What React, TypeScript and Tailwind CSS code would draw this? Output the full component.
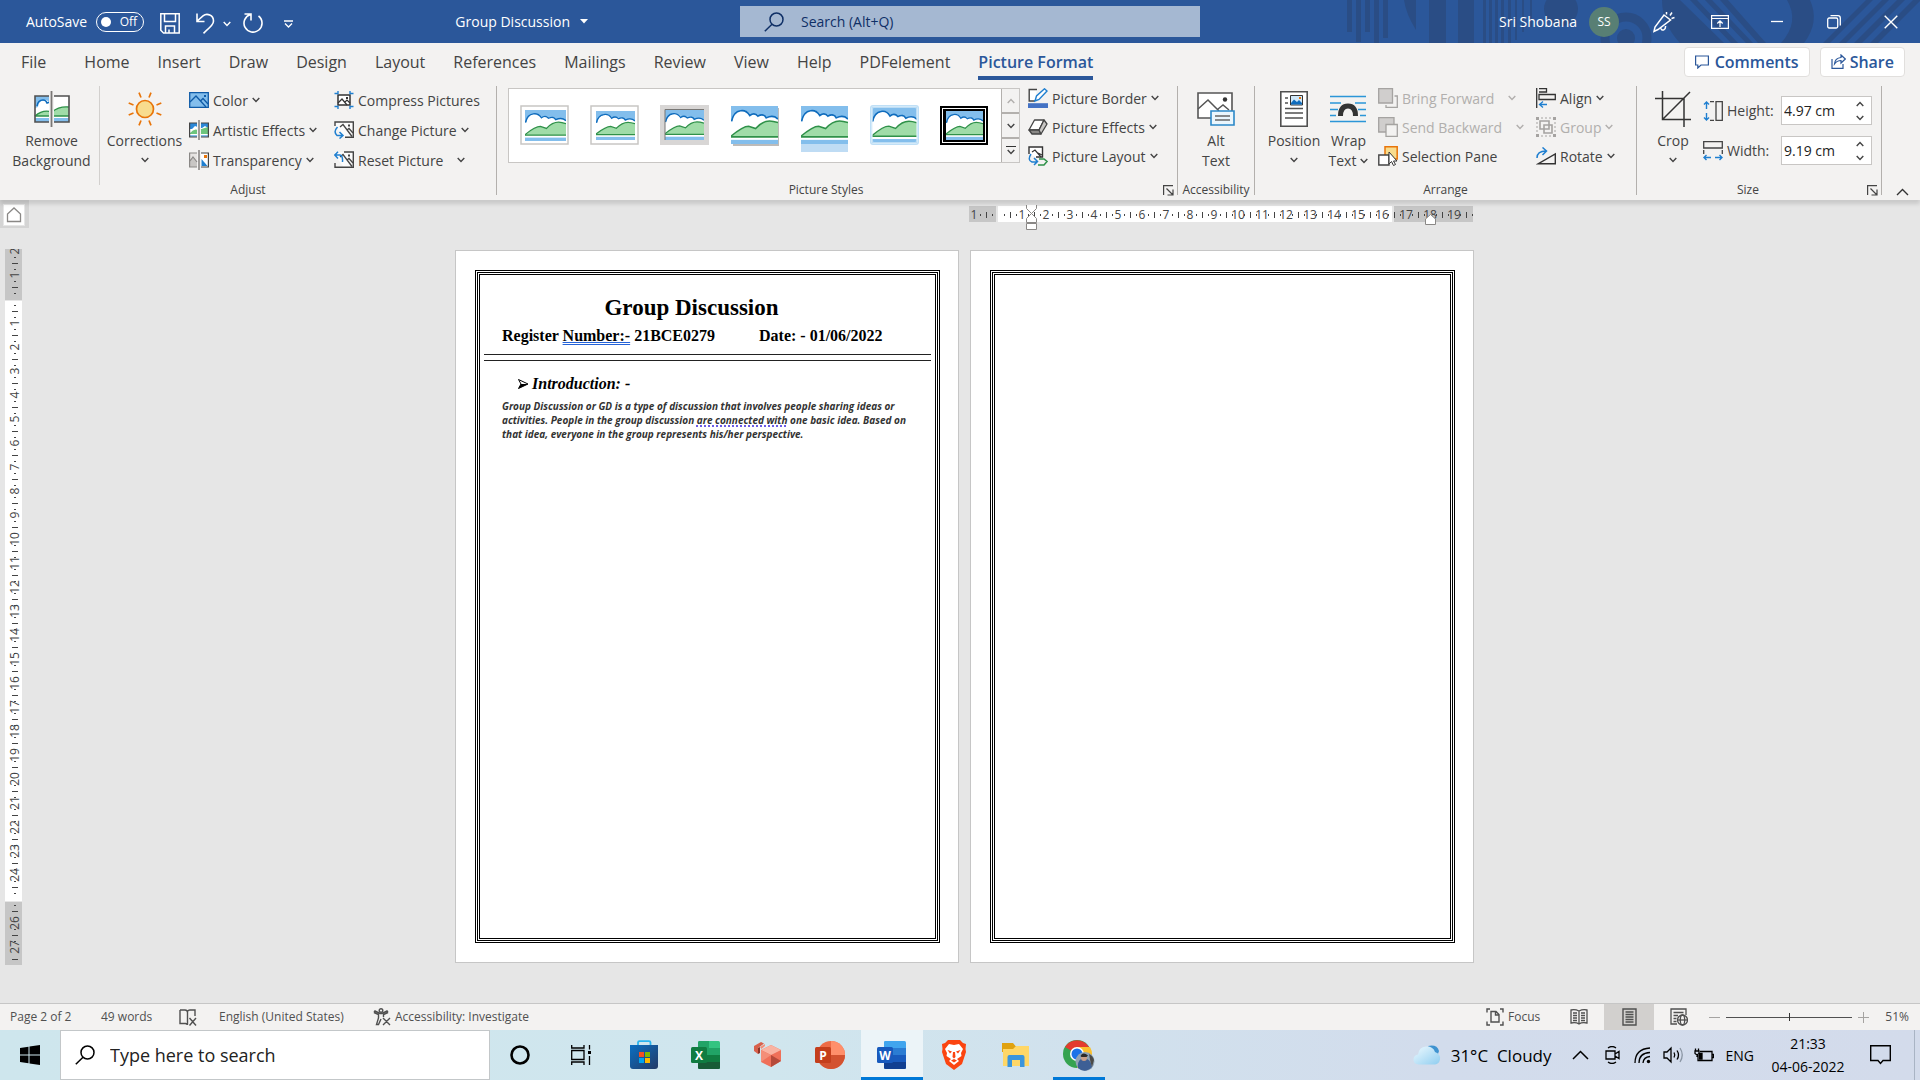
import { useState } from "react";
import type { ReactNode } from "react";

type IconProps = { className?: string };

const tabs = [
  "File",
  "Home",
  "Insert",
  "Draw",
  "Design",
  "Layout",
  "References",
  "Mailings",
  "Review",
  "View",
  "Help",
  "PDFelement",
  "Picture Format",
];

/* ---------- small shared pieces ---------- */

function Caret({ className = "" }: IconProps) {
  return (
    <svg className={`shrink-0 ${className}`} width="8" height="6" viewBox="0 0 8 6" fill="none" stroke="currentColor" strokeWidth="1.4">
      <path d="M0.7 1 4 4.5 7.3 1" />
    </svg>
  );
}

function SearchGlyph({ className = "" }: IconProps) {
  return (
    <svg className={className} width="20" height="20" viewBox="0 0 20 20" fill="none" stroke="currentColor" strokeWidth="1.5">
      <circle cx="12.5" cy="7.5" r="6.5" />
      <path d="M8 12.2 0.8 19.2" />
    </svg>
  );
}

// The hills-and-clouds drawing that every picture style uses
function Landscape() {
  return (
    <>
      <rect width="40" height="32" fill="#fff" />
      <path d="M0 0H40V11Q36 7 30 10Q28 6 24 8Q20 5 17 8Q13 2 8 4Q2 6 1.5 12L0 13Z" fill="#83beec" />
      <path d="M0.5 13Q2 5 8 4Q13 3 16 8Q20 5 23 8.5Q28 6 30 10Q36 7 40 11" fill="none" stroke="#0f6cbd" strokeWidth="1.4" />
      <path d="M0 26Q10 17 15 17Q18 18 21 19Q28 11 36 13L40 14V26Z" fill="#a0dca8" />
      <path d="M0 25.5Q10 17 15 17Q18 18 21 19Q28 11 36 13L40 14" fill="none" stroke="#2f9149" strokeWidth="1.3" />
      <path d="M0 26H40" stroke="#2f9149" strokeWidth="1.3" />
      <rect y="28.5" width="40" height="3.5" fill="#83beec" />
    </>
  );
}

/* ---------- title bar ---------- */

function TitleDecoration() {
  return (
    <svg className="absolute right-0 top-0" width="580" height="43" viewBox="0 0 580 43" fill="#2a4d85">
      <path d="M7 0h5v32H7zM16 0h5v42h-5zM25 0h5v32h-5zM34 0h5v43h-5zM43 0h5v38h-5z" />
      <path d="M64 0H76V30Q66 14 64 0ZM89 0h17v43H89zM118 0h16v43h-16z" />
      <path d="M143 0h3v43h-3zM149 0h3v43h-3zM155 0h3v43h-3zM161 0h3v43h-3zM168 0h3v43h-3zM175 0h2v40h-2zM182 0h2v32h-2zM190 0h2v27h-2z" />
      <circle cx="221" cy="9" r="17" />
      <circle cx="286" cy="38" r="21" fill="none" stroke="#2a4d85" strokeWidth="9" />
      <circle cx="286" cy="38" r="9" />
      <path d="M322 0H340L384 43H340Q322 24 322 0Z" />
      <path d="M350 0h7l41 43h-7zM365 0h7l41 43h-7zM380 0h8l38 43h-8z" />
      <path d="M447 0H470Q480 22 464 43H441Q460 22 447 0Z" />
      <path d="M526 0h7L490 43h-7zM542 0h7L506 43h-7zM557 0h8L522 43h-8zM573 0h7v1L538 43h-8z" />
    </svg>
  );
}

function TitleBar() {
  const [autoSave, setAutoSave] = useState(false);
  return (
    <header className="relative h-[43px] shrink-0 bg-[#2b579a] text-white">
      <TitleDecoration />
      <div className="relative grid h-full grid-cols-[37fr_23fr_36fr] items-center text-[14px]">
        <div className="flex items-center pl-[26px]">
          <span id="autosave">AutoSave</span>
          <button
            role="switch"
            aria-checked={autoSave}
            aria-labelledby="autosave"
            onClick={() => setAutoSave(!autoSave)}
            className="ml-[9px] flex h-5 w-12 items-center justify-between rounded-full border border-white px-1 text-[12px]"
          >
            <span className="h-2.5 w-2.5 rounded-full bg-white" />
            <span className="pr-0.5">{autoSave ? "On" : "Off"}</span>
          </button>
          <button aria-label="Save" className="ml-4 mt-1">
            <svg width="20" height="21" viewBox="0 0 20 21" fill="none" stroke="#fff" strokeWidth="1.5">
              <path d="M0.8 0.8H19.2V20H3.5L0.8 17.3ZM4.5 1V8.5H15.5V1M5.5 20V13H14.5V20M9 20v-3.5" />
            </svg>
          </button>
          <button aria-label="Undo" className="ml-4 mt-1 flex items-center gap-2">
            <svg width="19" height="21" viewBox="0 0 19 21" fill="none" stroke="#fff" strokeWidth="1.6">
              <path d="M1 0.5V8.5H8.5M1.2 8 7 2.8C11 -0.2 17.5 2 17.5 8C17.5 11 16 12.5 7.5 20.3" />
            </svg>
            <Caret />
          </button>
          <button aria-label="Repeat" className="ml-3 mt-1">
            <svg width="21" height="21" viewBox="0 0 21 21" fill="none" stroke="#fff" strokeWidth="1.6">
              <path d="M1.5 1H8V7.5M7.5 1.5A9 9 0 1 0 15.500 3" />
            </svg>
          </button>
          <button aria-label="Customize Quick Access Toolbar" className="ml-5 mt-1">
            <svg width="9" height="8" viewBox="0 0 9 8" fill="none" stroke="#fff" strokeWidth="1.3">
              <path d="M0 1H9M1 3.5 4.5 7 8 3.5" />
            </svg>
          </button>
          <button className="ml-auto mr-[152px] flex items-center gap-2.5 whitespace-nowrap">
            Group Discussion
            <svg width="8" height="5" viewBox="0 0 8 5" fill="#fff">
              <path d="M0 0H8L4 4.5Z" />
            </svg>
          </button>
        </div>
        <label className="flex h-[31px] items-center bg-[#a5b8d2] px-6 text-[#0f2f66]">
          <SearchGlyph />
          <input
            aria-label="Search"
            placeholder="Search (Alt+Q)"
            className="ml-[17px] min-w-0 flex-1 bg-transparent outline-none placeholder:text-[#0f2f66]"
          />
        </label>
        <div className="flex items-center justify-end pr-[22px]">
          <span className="whitespace-nowrap">Sri Shobana</span>
          <button aria-label="Account" className="ml-3 h-[30px] w-[30px] rounded-full bg-[#587f74] text-[12px]">
            SS
          </button>
          <button aria-label="Coming soon" className="ml-[34px]">
            <svg width="22" height="22" viewBox="0 0 22 22" fill="none" stroke="#fff" strokeWidth="1.5">
              <path d="M11 4 17.5 9 5 18.5 1 20.5 2 16ZM8 17.5c1 3 5 1.5 4.5-2.5M13.5 3.5V1M17 4.5 19 1.5M18.5 7.5 21.5 6.5" />
            </svg>
          </button>
          <button aria-label="Ribbon display options" className="ml-9">
            <svg width="18" height="14" viewBox="0 0 18 14" fill="none" stroke="#fff" strokeWidth="1.2">
              <path d="M0.6 0.6H17.4V13.4H0.6ZM0.6 3.5H17.4M9 12V6M6.3 8.5 9 5.8 11.7 8.5" />
            </svg>
          </button>
          <button aria-label="Minimize" className="ml-[41px]">
            <svg width="14" height="14" viewBox="0 0 14 14" stroke="#fff" strokeWidth="1.3">
              <path d="M1 6.5H13" />
            </svg>
          </button>
          <button aria-label="Restore" className="ml-[43px]">
            <svg width="14" height="14" viewBox="0 0 14 14" fill="none" stroke="#fff" strokeWidth="1.3">
              <rect x="0.7" y="3" width="10" height="10" rx="1.5" />
              <path d="M3.5 0.7H11Q13.3 0.7 13.3 3V10.5" />
            </svg>
          </button>
          <button aria-label="Close" className="ml-[43px]">
            <svg width="14" height="14" viewBox="0 0 14 14" stroke="#fff" strokeWidth="1.4">
              <path d="M0.7 0.7 13.3 13.3M13.3 0.7 0.7 13.3" />
            </svg>
          </button>
        </div>
      </div>
    </header>
  );
}

/* ---------- ribbon tabs ---------- */

function RibbonTabs() {
  const [active, setActive] = useState("Picture Format");
  return (
    <nav className="flex h-[37px] shrink-0 items-center bg-[#f3f2f1] pl-[21px] pr-[15px]">
      <div className="flex flex-1 gap-7 text-[16px] text-[#444]">
        {tabs.map((tab) => (
          <button
            key={tab}
            onClick={() => setActive(tab)}
            className={
              tab === active
                ? "h-9 whitespace-nowrap border-b-4 border-[#2b579a] pt-1 font-semibold text-[#2b579a]"
                : "h-9 whitespace-nowrap border-b-4 border-transparent pt-1 first:pr-2.5"
            }
          >
            {tab}
          </button>
        ))}
      </div>
      <div className="flex gap-2.5 text-[16px] font-semibold text-[#2b579a]">
        <button className="flex h-[30px] items-center gap-1.5 rounded border border-[#e1dfdd] bg-white px-2.5">
          <svg width="14" height="14" viewBox="0 0 14 14" fill="none" stroke="#2b579a" strokeWidth="1.2">
            <path d="M0.6 1H13.4V10H6L2.8 13V10H0.6Z" />
          </svg>
          Comments
        </button>
        <button className="flex h-[30px] items-center gap-1 rounded border border-[#e1dfdd] bg-white px-2.5">
          <svg width="15" height="15" viewBox="0 0 15 15" fill="none" stroke="#2b579a" strokeWidth="1.2">
            <path d="M1 5V14.4H12V10M10 1 14.3 5 10 9V6.5Q6 6.5 3.5 10Q4 4 10 3.5Z" />
          </svg>
          Share
        </button>
      </div>
    </nav>
  );
}

/* ---------- ribbon icons ---------- */

function RemoveBackgroundIcon() {
  return (
    <svg width="36" height="36" viewBox="0 0 36 36" fill="none">
      <path d="M1 5H35V31H1Z" fill="#fff" />
      <path d="M1 5H17V13Q14 9 11 9Q4 10 4 16L1 17Z" fill="#83beec" />
      <path d="M3 15Q4 9 9 9Q12 9 13 12L16 11" stroke="#0f6cbd" strokeWidth="1.5" />
      <path d="M1 25Q9 18 18 21Q25 15 35 16V25Z" fill="#a0dca8" />
      <path d="M1 25Q9 18 18 21Q25 15 35 16M1 25H35" stroke="#2f9149" strokeWidth="1.4" />
      <path d="M1 27H35V31H1Z" fill="#83beec" />
      <path d="M1 5H35V31H1Z" stroke="#505050" strokeWidth="1.6" />
      <path d="M17.5 0V36" stroke="#f3f2f1" strokeWidth="5" />
      <path d="M17.5 0V36" stroke="#797775" strokeWidth="1.8" />
    </svg>
  );
}

function CorrectionsIcon() {
  return (
    <svg width="34" height="34" viewBox="0 0 34 34" fill="none" stroke="#e8750a" strokeWidth="1.7">
      <circle cx="17" cy="17" r="8.5" fill="#f8dc8e" />
      <path d="M13 5.5 11 0.7M21 5.5 23 0.7M13 28.5 11 33.3M21 28.5 23 33.3M5.5 13 0.7 11M5.5 21 0.7 23M28.5 13 33.3 11M28.5 21 33.3 23" />
    </svg>
  );
}

function ColorIcon() {
  return (
    <svg width="20" height="16" viewBox="0 0 20 16" fill="none" stroke="#0f5ba7" strokeWidth="1.3">
      <path d="M0.7 0.7H19.3V15.3H0.7Z" fill="#83beec" />
      <path d="M1 10 7 4 17 15M11.5 9 14 6.5 19 12" fill="none" />
      <path d="M15 3h2v2h-2z" fill="#0f5ba7" stroke="none" />
    </svg>
  );
}

function ArtisticIcon() {
  return (
    <svg width="20" height="20" viewBox="0 0 20 20" fill="none">
      <path d="M0.6 3H19.4V17H0.6Z" fill="#fff" />
      <path d="M1 3H19V8L16 6 13 8H11L6 6 3 9H1Z" fill="#2b88d8" />
      <path d="M1 13Q5 8 9 10L19 7V14H1Z" fill="#6cc47c" />
      <path d="M1 15h18v2H1z" fill="#83beec" />
      <path d="M0.6 3H19.4V17H0.6Z" stroke="#444" strokeWidth="1.2" />
      <path d="M10 0V20" stroke="#f3f2f1" strokeWidth="4" />
      <path d="M10 0V20" stroke="#797775" strokeWidth="1.4" />
    </svg>
  );
}

function TransparencyIcon() {
  return (
    <svg width="20" height="20" viewBox="0 0 20 20" fill="none">
      <path d="M0.6 3H8V17H0.6Z" fill="#e6e4e2" />
      <path d="M0.6 17V11L4 7 8 12V17Z" fill="#c8c6c4" />
      <path d="M8 3H0.6V17H8M1 11 4 7 8 12" stroke="#8a8886" strokeWidth="1.2" />
      <path d="M12 3H19.4V17H12" fill="#fff" stroke="#444" strokeWidth="1.2" />
      <path d="M12.5 16V9L18.5 16Z" fill="#1f7fd0" />
      <path d="M15 5h3v3h-3z" fill="#e8750a" />
      <path d="M10 0V20" stroke="#797775" strokeWidth="1.4" />
    </svg>
  );
}

function CompressIcon() {
  return (
    <svg width="20" height="18" viewBox="0 0 20 18" fill="none">
      <path d="M4 4H16V14H4Z" fill="#fff" stroke="#333" strokeWidth="1.5" />
      <path d="M4 12 8 8 13 14M11 11 13 9 16 12" stroke="#333" strokeWidth="1.2" />
      <path d="M12 6h2v2h-2z" fill="#333" />
      <path d="M4 0V2.5H0.5M16 0V2.5H19.5M4 18V15.5H0.5M16 18V15.5H19.5" stroke="#1f7fd0" strokeWidth="1.4" />
    </svg>
  );
}

function ChangePictureIcon({ reset = false }: { reset?: boolean }) {
  return (
    <svg width="20" height="18" viewBox="0 0 20 18" fill="none">
      <path d="M1 5V1H19.3V16.3H10" fill="#fbfbfb" />
      <path d={reset ? "M10 1H19.3V16.3H1V12" : "M1 5V1H19.3V16.3H11"} stroke="#444" strokeWidth="1.4" />
      <path d="M6 6 9 3.5 18 15.5M13 9 15 7.5 19 12" stroke="#444" strokeWidth="1.3" />
      <path d="M14 3.5h2v2h-2z" fill="#444" />
      {reset ? (
        <path d="M1 4H6Q9 5 8.5 11M4 0.7 0.8 4 4 7.5" stroke="#1f7fd0" strokeWidth="1.5" />
      ) : (
        <path d="M3.5 6Q-1 11 3 14.5H8M5.5 11 9 14.5 5.5 17.5" stroke="#1f7fd0" strokeWidth="1.5" />
      )}
    </svg>
  );
}

function BorderIcon() {
  return (
    <svg width="20" height="20" viewBox="0 0 20 20" fill="none">
      <path d="M9 1.5H1.2V13H7" fill="#fff" stroke="#444" strokeWidth="1.4" />
      <path d="M7 13 8.5 8 16.5 0.8 19 3 11 11.5Z" fill="#fff" stroke="#1f7fd0" strokeWidth="1.4" />
      <path d="M0 15.2h20V20H0z" fill="#4472c4" />
    </svg>
  );
}

function EffectsIcon() {
  return (
    <svg width="20" height="16" viewBox="0 0 20 16" fill="none" stroke="#444" strokeWidth="1.3" strokeLinejoin="round">
      <path d="M6.500 1H16L11 11H1Z" fill="#fff" />
      <path d="M1 11H11L13 15H4Z" fill="#8a8886" />
      <path d="M16 1 19 5 13 15 11 11Z" fill="#c8c6c4" />
    </svg>
  );
}

function LayoutIcon() {
  return (
    <svg width="20" height="20" viewBox="0 0 20 20" fill="none">
      <path d="M1 8V1H14.5V11H8" fill="#fff" stroke="#333" strokeWidth="1.4" />
      <path d="M4 6 7 4 13 11M10 7 14 9" stroke="#333" strokeWidth="1.2" />
      <path d="M3 8Q-1 14 4 16H9M6 12 9.5 15.5 6 19" stroke="#1f7fd0" strokeWidth="1.5" />
      <path d="M11 13H16L19 15.5 16 19H10" stroke="#2f9149" strokeWidth="1.5" />
    </svg>
  );
}

function AltTextIcon() {
  return (
    <svg width="38" height="34" viewBox="0 0 38 34" fill="none">
      <path d="M1 1H35V26H1Z" fill="#fff" stroke="#555" strokeWidth="1.6" />
      <path d="M1 17 11 8 22 19M21 17 26 13 32 18" stroke="#555" strokeWidth="1.5" />
      <circle cx="28" cy="7.5" r="2.2" fill="#333" />
      <path d="M14 19H37V33H14Z" fill="#eaf6fd" stroke="#2b88c8" strokeWidth="1.6" />
      <path d="M18 24H33M18 28H33" stroke="#666" strokeWidth="1.4" />
    </svg>
  );
}

function PositionIcon() {
  return (
    <svg width="28" height="36" viewBox="0 0 28 36" fill="none" stroke="#505050">
      <path d="M0.8 0.8H27.2V35.2H0.8Z" fill="#fff" strokeWidth="1.6" />
      <path d="M5 7h3M5 12h3M5 17.5H23M5 22H23M5 27H23" strokeWidth="1.4" />
      <path d="M10.5 4.5H22.5V14H10.5Z" fill="#cfe7f8" stroke="#333" />
      <path d="M11 12 14 8.500 17 11 19 9 22 12V13.5H11Z" fill="#0f6cbd" stroke="none" />
      <path d="M19 6h2v2h-2z" fill="#e8750a" stroke="none" />
    </svg>
  );
}

function WrapIcon() {
  return (
    <svg width="36" height="28" viewBox="0 0 36 28" fill="none">
      <path d="M0 1.5H36M0 8H11M25 8H36M0 14.5H8M28 14.5H36M0 20.5H6M30 20.5H36M0 26.5H36" stroke="#2b96d8" strokeWidth="1.7" />
      <path d="M10.5 21Q10.5 11 18 11Q25.5 11 25.5 21" stroke="#333" strokeWidth="5" />
    </svg>
  );
}

function LayerIcon({ back = false }: { back?: boolean }) {
  return (
    <svg width="20" height="20" viewBox="0 0 20 20" fill="none" stroke="#a5a3a1" strokeWidth="1.3">
      {back ? (
        <>
          <path d="M0.7 0.7H16V15H0.7Z" fill="#d0cecd" />
          <path d="M8 7.5H19.3V19.3H8Z" fill="#f3f2f1" />
        </>
      ) : (
        <>
          <path d="M0.7 0.7H14.5V15H0.7Z" fill="#d0cecd" />
          <path d="M16.5 8H19.3V19.3H8V17" />
        </>
      )}
    </svg>
  );
}

function SelectionIcon() {
  return (
    <svg width="20" height="20" viewBox="0 0 20 20" fill="none">
      <path d="M7 0.8H19.2V13H7Z" fill="#f8dc8e" stroke="#e8750a" strokeWidth="1.5" />
      <path d="M0.8 9H11V19H0.8Z" fill="#fff" stroke="#444" strokeWidth="1.4" />
      <path d="M11 6V18L13.5 15.5 15.5 19.5 17.5 18.5 15.5 15H19Z" fill="#fff" stroke="#333" />
    </svg>
  );
}

function AlignIcon() {
  return (
    <svg width="20" height="20" viewBox="0 0 20 20" fill="none" stroke="#333" strokeWidth="1.3">
      <path d="M0.7 0V20M3 0.7H10.5V4H3M3 6.5H19.3V11.5H3Z" />
      <path d="M11 16.5H4M7 13.5 3.5 16.5 7 19.5" stroke="#1f7fd0" />
    </svg>
  );
}

function GroupIcon() {
  return (
    <svg width="20" height="20" viewBox="0 0 20 20" fill="none" stroke="#a5a3a1" strokeWidth="1.6">
      <path d="M4 4H13V12H4ZM8 8H16V16H8Z" />
      <path d="M0 1.5h3M17 1.5h3M0 18.5h3M17 18.5h3" strokeWidth="3" />
      <path d="M5 1H15M5 19H15M1 5V15M19 5V15" strokeDasharray="2 2" strokeWidth="1" />
    </svg>
  );
}

function RotateIcon() {
  return (
    <svg width="20" height="18" viewBox="0 0 20 18" fill="none">
      <path d="M2 16.8H19.3V7Z" stroke="#333" strokeWidth="1.4" />
      <path d="M1 11Q1 4 10 4M6.5 0.5 10.5 4 6.5 8" stroke="#1f7fd0" strokeWidth="1.5" />
    </svg>
  );
}

function CropIcon() {
  return (
    <svg width="36" height="36" viewBox="0 0 36 36" fill="none" stroke="#333" strokeWidth="1.5">
      <path d="M7.5 0V28.5H36M0 7.5H29V36M7.5 28.5 35 1" />
    </svg>
  );
}

function HeightIcon() {
  return (
    <svg width="20" height="20" viewBox="0 0 20 20" fill="none">
      <path d="M3.5 1V8M1 3.5 3.5 1 6 3.5M3.5 12V19M1 16.5 3.5 19 6 16.5" stroke="#1f7fd0" strokeWidth="1.4" />
      <path d="M7 0.7H11M7 19.3H11M13 0.7H19.3V19.3H13Z" stroke="#444" strokeWidth="1.3" />
    </svg>
  );
}

function WidthIcon() {
  return (
    <svg width="20" height="20" viewBox="0 0 20 20" fill="none">
      <path d="M1 16.5H8M3.5 14 1 16.5 3.5 19M12 16.5H19M16.5 14 19 16.5 16.5 19" stroke="#1f7fd0" strokeWidth="1.4" />
      <path d="M0.7 9V13M19.3 9V13M0.7 0.7H19.3V7H0.7Z" stroke="#444" strokeWidth="1.3" />
    </svg>
  );
}

/* ---------- ribbon ---------- */

function RibbonGroup({
  label,
  launcher = false,
  children,
}: {
  label: string;
  launcher?: boolean;
  children: ReactNode;
}) {
  return (
    <section aria-label={label} className="flex h-[109px] flex-col border-r border-[#b3b0ad]">
      <div className="flex flex-1">{children}</div>
      <div className="flex h-2.5 items-center">
        <span className="flex-1 whitespace-nowrap text-center text-[12px] leading-3">{label}</span>
        {launcher && (
          <button aria-label={`${label} dialog`} className="ml-2 mr-[3px]">
            <svg width="11" height="11" viewBox="0 0 11 11" fill="none" stroke="#444" strokeWidth="1.2">
              <path d="M0.6 10V0.6H10M3.5 3.5 9.5 9.5M10 4.5V10H4.5" />
            </svg>
          </button>
        )}
      </div>
    </section>
  );
}

function Command({
  icon,
  label,
  menu = false,
  split = false,
  disabled = false,
}: {
  icon: ReactNode;
  label: string;
  menu?: boolean;
  split?: boolean;
  disabled?: boolean;
}) {
  return (
    <button
      disabled={disabled}
      className={
        disabled
          ? "flex h-6 items-center gap-1 whitespace-nowrap text-[#b1afad]"
          : "flex h-6 items-center gap-1 whitespace-nowrap"
      }
    >
      {icon}
      {label}
      {menu && <Caret className={split ? "ml-2.5" : ""} />}
    </button>
  );
}

function BigCommand({ icon, lines, caret }: { icon: ReactNode; lines: string[]; caret?: "below" | "inline" }) {
  return (
    <button className="flex flex-col items-center leading-5">
      <span className="flex h-[45px] items-center">{icon}</span>
      {lines.map((line, i) => (
        <span key={line} className="flex items-center gap-1 whitespace-nowrap">
          {line}
          {caret === "inline" && i === lines.length - 1 && <Caret />}
        </span>
      ))}
      {caret === "below" && <Caret className="mt-1.5" />}
    </button>
  );
}

const pictureStyles = [
  "Simple Frame, White",
  "Beveled Matte, White",
  "Metal Frame",
  "Drop Shadow Rectangle",
  "Reflected Rounded Rectangle",
  "Soft Edge Rectangle",
  "Double Frame, Black",
];

// where the drawing sits inside its 50px thumbnail, per style
const thumbBoxes = [
  [5, 5, 41, 31],
  [6, 6, 39, 29],
  [5, 5, 39, 30],
  [1, 1, 47, 38],
  [1, 1, 47, 38],
  [2, 2, 45, 36],
  [6, 6, 37, 29],
];

function StyleThumb({ index }: { index: number }) {
  const [x, y, width, height] = thumbBoxes[index];
  return (
    <svg width="50" height="50" viewBox="0 0 50 50" fill="none">
      {index < 2 && <rect x="1" y="1" width="47" height="38" fill="#fff" stroke="#c8c6c4" strokeWidth="1.5" />}
      {index === 2 && <rect width="49" height="40" fill="#d8d6d5" />}
      {index === 3 && <rect x="3" y="3" width="46" height="38" fill="#bdbbb9" />}
      {index === 4 && <rect x="1" y="39" width="47" height="8" fill="#bfdcf4" />}
      {index === 5 && <rect width="49" height="40" rx="3" fill="#bfdff6" />}
      {index === 6 && <rect width="48" height="39" y="1" fill="#000" />}
      {index === 6 && <rect x="2.5" y="3.5" width="43" height="34" stroke="#fff" />}
      <svg x={x} y={y} width={width} height={height} viewBox="0 0 40 32" preserveAspectRatio="none">
        <Landscape />
      </svg>
      {index === 2 && <path d="M5 35V4.5H44" stroke="#797775" />}
      {index === 5 && <rect x="2" y="2" width="45" height="36" rx="2" stroke="#e3f1fb" strokeWidth="2" strokeOpacity="0.6" />}
    </svg>
  );
}

function SizeField({ icon, label, id, initial }: { icon: ReactNode; label: string; id: string; initial: string }) {
  const [value, setValue] = useState(initial);
  return (
    <div className="flex items-center gap-1">
      {icon}
      <label htmlFor={id} className="w-[50px]">
        {label}
      </label>
      <div className="flex h-[29px] w-[91px] items-center border border-[#c8c6c4] bg-white">
        <input
          id={id}
          value={value}
          onChange={(e) => setValue(e.target.value)}
          className="w-[74px] bg-transparent pl-0.5 text-[#222] outline-none"
        />
        <div className="flex flex-col gap-2">
          <button aria-label={`Increase ${label}`}>
            <Caret className="rotate-180" />
          </button>
          <button aria-label={`Decrease ${label}`}>
            <Caret />
          </button>
        </div>
      </div>
    </div>
  );
}

function Ribbon() {
  return (
    <div className="relative z-10 grid h-[120px] shrink-0 grid-cols-[497fr_681fr_77fr_382fr_245fr_38fr] bg-[#f3f2f1] pt-1.5 text-[14px] text-[#444] shadow-[0_4px_4px_#00000020]">
      <RibbonGroup label="Adjust">
        <div className="flex w-[100px] justify-center border-r border-[#d2d0ce] pl-1">
          <BigCommand icon={<RemoveBackgroundIcon />} lines={["Remove", "Background"]} />
        </div>
        <div className="flex w-[89px] justify-center">
          <BigCommand icon={<CorrectionsIcon />} lines={["Corrections"]} caret="below" />
        </div>
        <div className="flex w-[145px] flex-col items-start gap-1.5 pt-0.5">
          <Command icon={<ColorIcon />} label="Color" menu />
          <Command icon={<ArtisticIcon />} label="Artistic Effects" menu />
          <Command icon={<TransparencyIcon />} label="Transparency" menu />
        </div>
        <div className="flex flex-col items-start gap-1.5 pt-0.5">
          <Command icon={<CompressIcon />} label="Compress Pictures" />
          <Command icon={<ChangePictureIcon />} label="Change Picture" menu />
          <Command icon={<ChangePictureIcon reset />} label="Reset Picture" menu split />
        </div>
      </RibbonGroup>

      <RibbonGroup label="Picture Styles" launcher>
        <div className="ml-[11px] mt-0.5 flex h-[75px] flex-1 border border-[#c8c6c4] bg-white">
          <div className="flex flex-1 justify-between pl-[11px] pr-[11px] pt-4">
            {pictureStyles.map((name, i) => (
              <button key={name} aria-label={name} className="h-[50px]">
                <StyleThumb index={i} />
              </button>
            ))}
          </div>
          <div className="flex w-[18px] flex-col border-l border-[#b3b0ad] bg-[#f3f2f1]">
            <button aria-label="Scroll up" className="flex flex-1 items-center justify-center text-[#b1afad]">
              <Caret className="rotate-180" />
            </button>
            <button aria-label="Scroll down" className="flex flex-1 items-center justify-center border-y-2 border-[#b3b0ad]">
              <Caret />
            </button>
            <button aria-label="More styles" className="flex flex-1 flex-col items-center justify-center gap-0.5">
              <span className="h-px w-2.5 bg-[#333]" />
              <Caret />
            </button>
          </div>
        </div>
        <div className="flex w-[157px] flex-col items-start gap-[5px] pl-2">
          <Command icon={<BorderIcon />} label="Picture Border" menu />
          <Command icon={<EffectsIcon />} label="Picture Effects" menu />
          <Command icon={<LayoutIcon />} label="Picture Layout" menu />
        </div>
      </RibbonGroup>

      <RibbonGroup label="Accessibility">
        <div className="flex flex-1 justify-center">
          <BigCommand icon={<AltTextIcon />} lines={["Alt", "Text"]} />
        </div>
      </RibbonGroup>

      <RibbonGroup label="Arrange">
        <div className="flex w-[72px] justify-center pl-1.5">
          <BigCommand icon={<PositionIcon />} lines={["Position"]} caret="below" />
        </div>
        <div className="flex w-[51px] justify-center pr-2">
          <BigCommand icon={<WrapIcon />} lines={["Wrap", "Text"]} caret="inline" />
        </div>
        <div className="flex w-[158px] flex-col items-start gap-[5px]">
          <Command icon={<LayerIcon />} label="Bring Forward" menu split disabled />
          <Command icon={<LayerIcon back />} label="Send Backward" menu split disabled />
          <Command icon={<SelectionIcon />} label="Selection Pane" />
        </div>
        <div className="flex flex-col items-start gap-[5px]">
          <Command icon={<AlignIcon />} label="Align" menu />
          <Command icon={<GroupIcon />} label="Group" menu disabled />
          <Command icon={<RotateIcon />} label="Rotate" menu />
        </div>
      </RibbonGroup>

      <RibbonGroup label="Size" launcher>
        <div className="flex w-[66px] justify-center pl-1.5">
          <BigCommand icon={<CropIcon />} lines={["Crop"]} caret="below" />
        </div>
        <div className="flex flex-col gap-[11px] pt-2.5">
          <SizeField icon={<HeightIcon />} label="Height:" id="height" initial="4.97 cm" />
          <SizeField icon={<WidthIcon />} label="Width:" id="width" initial="9.19 cm" />
        </div>
      </RibbonGroup>

      <div className="flex items-end justify-center pb-1">
        <button aria-label="Collapse the ribbon" className="pl-0.5">
          <svg width="13" height="8" viewBox="0 0 13 8" fill="none" stroke="#333" strokeWidth="1.4">
            <path d="M1 7 6.5 1.5 12 7" />
          </svg>
        </button>
      </div>
    </div>
  );
}

/* ---------- rulers ---------- */

const UNIT = 24;

function HorizontalRuler() {
  const marks = Array.from({ length: 21 }, (_, i) => i - 1);
  return (
    <svg className="block" width="505" height="26" viewBox="0 0 505 26">
      <rect y="1" width="27" height="16" fill="#c6c6c6" />
      <rect x="29" y="1" width="394" height="16" fill="#fff" />
      <rect x="425" y="1" width="79" height="16" fill="#c6c6c6" />
      {marks.map((n) => {
        const x = 29 + n * UNIT;
        return (
          <g key={n} fill="#444">
            {n !== 0 && n < 20 && (
              <text x={x} y="14" fontSize="12" textAnchor="middle">
                {Math.abs(n)}
              </text>
            )}
            {n < 20 && <rect x={x + 6} y="9" width="1" height="2" />}
            {n < 20 && <rect x={x + 12} y="7" width="1" height="6" />}
            {n < 20 && <rect x={x + 18} y="9" width="1" height="2" />}
          </g>
        );
      })}
      <g fill="#fff" stroke="#8a8886">
        <path d="M57.5 -0.5H67.5V3.5L62.5 8.5 57.5 3.5Z" />
        <path d="M57.5 17.5V13.5L62.5 8.5 67.5 13.5V17.5ZM57.5 18.5H67.500V24.5H57.5Z" />
        <path d="M456.5 19.5V14L461.5 9.5 466.5 14V19.5Z" />
      </g>
    </svg>
  );
}

function VerticalRuler() {
  const marks = Array.from({ length: 30 }, (_, i) => i - 2);
  return (
    <svg className="block" width="17" height="716" viewBox="0 0 17 716">
      <rect width="17" height="51" fill="#c6c6c6" />
      <rect y="52" width="17" height="600" fill="#fff" />
      <rect y="653" width="17" height="63" fill="#c6c6c6" />
      {marks.map((n) => {
        const y = 50 + n * UNIT;
        return (
          <g key={n} fill="#444">
            {n !== 0 && n !== 25 && (
              <text transform={`translate(14 ${y}) rotate(-90)`} fontSize="12" textAnchor="middle">
                {Math.abs(n)}
              </text>
            )}
            {n < 27 && <rect x="9" y={y + 6} width="2" height="1" />}
            <rect x="7" y={y + 12} width="6" height="1" />
            {n < 27 && <rect x="9" y={y + 18} width="2" height="1" />}
          </g>
        );
      })}
    </svg>
  );
}

/* ---------- document ---------- */

function Page({ children }: { children?: ReactNode }) {
  return (
    <article className="h-[713px] w-[504px] border border-[#c6c6c6] bg-white pb-[19px] pl-[19px] pr-[18px] pt-[19px]">
      <div className="h-full border border-black p-px">
        <div className="h-full border border-black p-px">
          <div className="h-full border border-black px-1 pt-[19px] text-black">{children}</div>
        </div>
      </div>
    </article>
  );
}

function Workspace() {
  return (
    <main className="flex flex-1 bg-[#e6e6e6]">
      <div className="flex w-[29px] flex-col">
        <div className="mb-[21px] h-7 bg-[#d4d4d4] pl-[3px] pt-1">
          <button aria-label="Tab stop" className="block border border-[#e6e6e6] bg-white p-0.5">
            <svg width="16" height="16" viewBox="0 0 16 16" fill="none" stroke="#8a8886" strokeWidth="1.3">
              <path d="M1.5 14.5V7L8 1 14.5 7V14.5Z" />
            </svg>
          </button>
        </div>
        <div className="pl-[5px]">
          <VerticalRuler />
        </div>
      </div>
      <div className="flex flex-1 flex-col items-center pr-5 pt-[5px]">
        <div className="mb-[19px] flex w-[1019px] justify-end">
          <HorizontalRuler />
        </div>
        <div className="flex gap-[11px]">
          <Page>
            <h1 className="pr-8 text-center font-['Liberation_Serif',serif] text-[23px] font-bold leading-7">
              Group Discussion
            </h1>
            <div className="mt-1 flex pl-[18px] font-['Liberation_Serif',serif] text-[16px] font-bold leading-5">
              <p className="w-[257px]">
                Register{" "}
                <span className="underline decoration-[#2563d8] decoration-double decoration-1 underline-offset-1">
                  Number:-
                </span>{" "}
                21BCE0279
              </p>
              <p>Date: - 01/06/2022</p>
            </div>
            <div className="mt-2 h-[7px] border-y border-[#222]" />
            <h2 className="mt-[13px] flex items-center gap-[3px] pl-[33px] font-['Liberation_Serif',serif] text-[16px] font-bold italic leading-5">
              <svg width="12" height="12" viewBox="0 0 12 12">
                <path d="M1.5 1.500 11 6 1.5 10.5 4 6Z" fill="none" stroke="#000" />
                <path d="M4 6H11L1.5 10.5Z" />
              </svg>
              Introduction: -
            </h2>
            <p className="mt-[5px] whitespace-nowrap pl-[18px] text-[10px] font-bold italic leading-[14px] text-[#333]">
              Group Discussion or GD is a type of discussion that involves people sharing ideas or
              <br />
              activities. People in the group discussion{" "}
              <span className="underline decoration-[#6b5be6] decoration-dotted decoration-2">are connected with</span>{" "}
              one basic idea. Based on
              <br />
              that idea, everyone in the group represents his/her perspective.
            </p>
          </Page>
          <Page />
        </div>
      </div>
    </main>
  );
}

/* ---------- status bar ---------- */

function StatusBar() {
  const [zoom, setZoom] = useState(50);
  return (
    <footer className="flex h-[27px] shrink-0 items-center border-t border-[#c6c6c6] bg-[#f3f2f1] pl-2.5 pr-[11px] text-[12px] text-[#505050]">
      <button className="w-[91px] text-left">Page 2 of 2</button>
      <button className="w-[78px] text-left">49 words</button>
      <button aria-label="Proofing" className="w-10">
        <svg width="18" height="17" viewBox="0 0 18 17" fill="none" stroke="#505050" strokeWidth="1.4">
          <path d="M8.5 3V15.5M1 1H6Q8.5 1 8.5 3.5Q8.5 1 11 1H16V7M1 1V14.5H6.5Q8.5 15 8.5 16M10.5 9 17 16.5M17 9 10.5 16.5" />
        </svg>
      </button>
      <button className="w-[154px] text-left">English (United States)</button>
      <button className="flex items-center gap-1">
        <svg width="18" height="18" viewBox="0 0 18 18" fill="none" stroke="#505050" strokeWidth="1.4">
          <circle cx="8" cy="2.5" r="1.8" />
          <path d="M1 4.5 5.5 6.5V10L3.5 16.5H5.5L8 11M15 4.5 10.5 6.5V9M1 4.5 2 3 7 5.5H9L14 3 15 4.5M10 10 17 17M17 10 10 17" />
        </svg>
        Accessibility: Investigate
      </button>

      <button className="ml-auto mr-[30px] flex items-center gap-1">
        <svg width="18" height="18" viewBox="0 0 18 18" fill="none" stroke="#505050" strokeWidth="1.4">
          <path d="M4 1H1V4.5M14 1H17V4.5M4 17H1V13.5M14 17H17V13.5M5 3.5H10L13 6.5V14H5ZM9.5 3.5V7H13" />
        </svg>
        Focus
      </button>
      <button aria-label="Read mode" className="mr-4">
        <svg width="18" height="16" viewBox="0 0 18 16" fill="none" stroke="#505050" strokeWidth="1.3">
          <path d="M9 2Q5 0 1 1V14Q6 13 9 15Q12 13 17 14V1Q13 0 9 2ZM9 2V15M3 4H7M3 6.5H7M3 9H7M3 11.5H7M11 4H15M11 6.5H15M11 9H15M11 11.5H15" />
        </svg>
      </button>
      <button aria-label="Print layout" className="flex h-full w-[50px] items-center justify-center bg-[#d2d0ce]">
        <svg width="15" height="18" viewBox="0 0 15 18" fill="none" stroke="#505050" strokeWidth="1.4">
          <path d="M1 1H14V17H1ZM3.5 4H11.5M3.5 6.5H11.5M3.5 9H11.5M3.5 11.5H11.5M3.5 14H11.5" />
        </svg>
      </button>
      <button aria-label="Web layout" className="ml-4 mr-[21px]">
        <svg width="18" height="18" viewBox="0 0 18 18" fill="none" stroke="#505050" strokeWidth="1.3">
          <path d="M16 7V1H1V16H7M3.5 4.5H13.5M3.5 7.5H8M3.5 10.5H6.5M3.5 13.5H6.5" />
          <circle cx="12.5" cy="12" r="5" />
          <ellipse cx="12.5" cy="12" rx="2.2" ry="5" />
          <path d="M7.5 12h10" />
        </svg>
      </button>
      <button aria-label="Zoom out" onClick={() => setZoom(Math.max(0, zoom - 10))}>
        <svg width="11" height="11" viewBox="0 0 11 11" stroke="#a5a3a1">
          <path d="M0 5.5H11" />
        </svg>
      </button>
      <input
        type="range"
        aria-label="Zoom"
        value={zoom}
        onChange={(e) => setZoom(Number(e.target.value))}
        className="mx-1.5 h-2 w-[126px] appearance-none bg-[linear-gradient(#505050,#505050)] bg-[length:100%_1px] bg-center bg-no-repeat [&::-webkit-slider-thumb]:h-2 [&::-webkit-slider-thumb]:w-px [&::-webkit-slider-thumb]:appearance-none [&::-webkit-slider-thumb]:bg-[#333]"
      />
      <button aria-label="Zoom in" onClick={() => setZoom(Math.min(100, zoom + 10))}>
        <svg width="11" height="11" viewBox="0 0 11 11" stroke="#a5a3a1">
          <path d="M0 5.5H11M5.5 0V11" />
        </svg>
      </button>
      <button className="ml-4">51%</button>
    </footer>
  );
}

/* ---------- taskbar ---------- */

function OfficeIcon({ letter, colors, round = false }: { letter: string; colors: string[]; round?: boolean }) {
  return (
    <svg width="30" height="30" viewBox="0 0 30 30">
      {round ? (
        <>
          <circle cx="16" cy="15" r="14" fill={colors[0]} />
          <path d="M16 1A14 14 0 0 1 30 15H16Z" fill={colors[1]} />
          <path d="M30 15A14 14 0 0 1 2 15Z" fill={colors[2]} />
        </>
      ) : (
        <>
          <rect x="7" y="1" width="22" height="28" rx="1.5" fill={colors[1]} />
          <path d="M7 2.5Q7 1 8.5 1H18V8H7Z" fill={colors[0]} />
          <path d="M7 8h22v7H7z" fill={colors[2]} />
          <path d="M7 15h22v7H7z" fill={colors[3]} />
          <path d="M7 22H29V27.5Q29 29 27.5 29H8.5Q7 29 7 27.5Z" fill={colors[4]} />
        </>
      )}
      <rect x="0" y="7" width="16" height="16" rx="1.5" fill={colors[5]} />
      <text x="8" y="19.5" fontSize="12" fontWeight="700" fill="#fff" textAnchor="middle">
        {letter}
      </text>
    </svg>
  );
}

function StoreIcon() {
  return (
    <svg width="30" height="30" viewBox="0 0 30 30">
      <defs>
        <linearGradient id="bag" x1="0" y1="0" x2="1" y2="1">
          <stop offset="0" stopColor="#0a6fc2" />
          <stop offset="1" stopColor="#243a66" />
        </linearGradient>
      </defs>
      <path d="M9 6V2.5Q9 1.2 10.5 1.2H20Q21.5 1.2 21.5 2.5V6" fill="none" stroke="#2bb4ee" strokeWidth="1.8" />
      <path d="M1 5H29V26Q29 29 26 29H4Q1 29 1 26Z" fill="url(#bag)" />
      <path d="M10 12h5v5h-5z" fill="#f25022" />
      <path d="M16 12h5v5h-5z" fill="#7fba00" />
      <path d="M10 18h5v5h-5z" fill="#00a4ef" />
      <path d="M16 18h5v5h-5z" fill="#ffb900" />
    </svg>
  );
}

function CubesIcon() {
  return (
    <svg width="28" height="26" viewBox="0 0 28 26">
      <path d="M17 3 27 8V19L17 25 7 20V8Z" fill="#ef7059" />
      <path d="M17 3 27 8 17 13 7 8Z" fill="#f9b3a2" />
      <path d="M17 13 27 19 17 25Z" fill="#b54a3a" />
      <path d="M7 8 17 13 7 20Z" fill="#f48e78" />
      <path d="M0 4 7 0 10 1.5 4 6V12L0 9Z" fill="#d8604b" />
      <path d="M6 5 11 2V4L7.5 7Z" fill="#f48e78" />
      <path d="M4 6 6 5V11L4 12Z" fill="#8f3327" />
    </svg>
  );
}

function BraveIcon() {
  return (
    <svg width="26" height="30" viewBox="0 0 26 30">
      <path d="M7 0H19L22 3 25 4 24.5 9 25 12 21 24 13 30 5 24 1 12 1.5 9 1 4 4 3Z" fill="#fb4410" />
      <path d="M13 5 18 4 22 9 20 13 20.5 16 16 19 18 21 13 25 8 21 10 19 5.5 16 6 13 4 9 8 4Z" fill="#fff" />
      <path d="M6.5 10 11 11.5 9 13.5ZM19.5 10 15 11.5 17 13.5ZM12 12H14L14.5 17 13 18.5 11.5 17ZM10 20.5 13 19 16 20.5 13 22.5Z" fill="#fb4410" />
    </svg>
  );
}

function ExplorerIcon() {
  return (
    <svg width="28" height="26" viewBox="0 0 28 26">
      <path d="M0 1H11L13.5 4H27V10H0Z" fill="#e0a210" />
      <path d="M1 7H11L14 4H27V24H1Z" fill="#ffd767" />
      <path d="M5.5 25V15Q5.5 13 7.5 13H20.5Q22.5 13 22.5 15V25H18V18H10V25Z" fill="#3b95dc" />
    </svg>
  );
}

// Browser icon with the small profile photo over its corner
function ChromeIcon() {
  return (
    <svg width="32" height="33" viewBox="0 0 32 33">
      <circle cx="14" cy="15" r="14" fill="#35a350" />
      <path d="M14 15 2 8A14 14 0 0 1 26 8Z" fill="#e33b2e" />
      <path d="M14 8H27A14 14 0 0 1 14 29L20 18Z" fill="#fbc02d" />
      <circle cx="14" cy="15" r="7" fill="#fff" />
      <circle cx="14" cy="15" r="5.5" fill="#1a73e8" />
      <circle cx="22" cy="22.5" r="9.5" fill="#8fa3b3" />
      <path d="M15 29Q14 20 21 19Q28 20 29 28Q22 35 15 29Z" fill="#3d5f95" />
      <path d="M26 15Q30 17 31 21L29 28Q27 22 26 15Z" fill="#4b4a48" />
      <circle cx="21" cy="19" r="3" fill="#c99f88" />
      <path d="M17.5 17Q20 12.5 25 16.5L23.5 18H18.5Z" fill="#2b2b2b" />
    </svg>
  );
}

const pinnedApps = [
  { name: "Microsoft Store", icon: <StoreIcon /> },
  {
    name: "Excel",
    icon: <OfficeIcon letter="X" colors={["#21a366", "#33c481", "#21a366", "#107c41", "#185c37", "#107c41"]} />,
  },
  { name: "Cubes", icon: <CubesIcon /> },
  {
    name: "PowerPoint",
    icon: <OfficeIcon letter="P" round colors={["#ed6c47", "#ff8f6b", "#d35230", "", "", "#c43e1c"]} />,
  },
  {
    name: "Word",
    icon: <OfficeIcon letter="W" colors={["#41a5ee", "#41a5ee", "#2b7cd3", "#185abd", "#103f91", "#185abd"]} />,
  },
  { name: "Brave", icon: <BraveIcon /> },
  { name: "File Explorer", icon: <ExplorerIcon /> },
  { name: "Chrome", icon: <ChromeIcon /> },
];

function Tray() {
  return (
    <div className="flex h-full items-center text-[14px] text-black">
      <button className="flex items-center gap-2.5 whitespace-nowrap text-[17px]">
        <svg width="28" height="20" viewBox="0 0 28 20">
          <defs>
            <linearGradient id="cloud" x1="0" y1="0" x2="1" y2="1">
              <stop offset="0" stopColor="#eefaff" />
              <stop offset="1" stopColor="#8fcdf0" />
            </linearGradient>
          </defs>
          <path d="M15 1Q24 -1 26 6L24 12Z" fill="#3f93d0" />
          <path d="M6 19.5Q0 19 0.5 14Q1 10 5 9.5Q6 2 13 1.5Q20 1 22 7Q28 9 27 14.5Q26 19 22 19.5Z" fill="url(#cloud)" />
        </svg>
        <span className="pt-0.5">31°C&nbsp; Cloudy</span>
      </button>
      <button aria-label="Show hidden icons" className="ml-5">
        <svg width="17" height="10" viewBox="0 0 17 10" fill="none" stroke="#000" strokeWidth="1.5">
          <path d="M1 9 8.5 1.5 16 9" />
        </svg>
      </button>
      <button aria-label="Meet now" className="ml-4">
        <svg width="15" height="18" viewBox="0 0 15 18" fill="none" stroke="#000" strokeWidth="1.3">
          <path d="M1 5H10V13H1ZM10 8 14 5.5V12.5L10 10M3 2Q7 -1 11 2M3 16Q7 19 11 16" />
        </svg>
      </button>
      <button aria-label="Network" className="ml-3.5">
        <svg width="17" height="17" viewBox="0 0 17 17" fill="none" stroke="#000" strokeWidth="1.3">
          <path d="M1 16Q1 2 16 1M5 16Q5 6 16 5.5M9 16Q9.5 10 16 9.5" />
          <circle cx="14.5" cy="14.5" r="1.7" fill="#000" stroke="none" />
        </svg>
      </button>
      <button aria-label="Volume" className="ml-3">
        <svg width="21" height="18" viewBox="0 0 21 18" fill="none" stroke="#000" strokeWidth="1.3">
          <path d="M1 6H4L8 2V16L4 12H1ZM11 6.5Q12.5 9 11 11.5M14 4.5Q17 9 14 13.5" />
          <path d="M17 2Q21.5 9 17 16" stroke="#8a95a3" />
        </svg>
      </button>
      <button aria-label="Battery" className="ml-2.5">
        <svg width="20" height="14" viewBox="0 0 20 14" fill="none" stroke="#000" strokeWidth="1.3">
          <path d="M6 3.5H18V12.5H4V7M18 6.5H19.5V9.5H18M1 3H5V5.5L3 7 1 5.5ZM1.5 3V0.5M4.5 3V0.5M3 7V9" />
          <path d="M5.5 5.5H8V11H5.5Z" fill="#000" />
        </svg>
      </button>
      <button className="ml-3">ENG</button>
      <button className="ml-3 w-[84px] text-center leading-[23px]">
        21:33
        <br />
        04-06-2022
      </button>
      <button aria-label="Notifications" className="ml-5">
        <svg width="21" height="20" viewBox="0 0 21 20" fill="none" stroke="#000" strokeWidth="1.4">
          <path d="M0.7 0.7H20.3V15.5H13L10.5 18.5 8 15.5H0.7Z" />
        </svg>
      </button>
      <span className="ml-[23px] h-full w-1.5 border-l border-[#a9b4c4]" />
    </div>
  );
}

function Taskbar() {
  return (
    <div className="flex h-[50px] shrink-0 items-center bg-[linear-gradient(90deg,#cee6ed,#d0e6ee_40%,#d2dcec_75%,#d3dbeb)]">
      <button aria-label="Start" className="flex w-[60px] justify-center">
        <svg width="20" height="20" viewBox="0 0 20 20">
          <path d="M0 3 8.5 1.7V9.5H0ZM9.5 1.5 20 0V9.5H9.5ZM0 10.5H8.5V18.3L0 17ZM9.5 10.5H20V20L9.5 18.5Z" />
        </svg>
      </button>
      <label className="flex h-full w-[430px] items-center border border-[#c3c7c9] bg-white pl-3.5">
        <SearchGlyph />
        <input
          aria-label="Type here to search"
          placeholder="Type here to search"
          className="ml-[15px] flex-1 text-[18px] outline-none placeholder:text-[#222]"
        />
      </label>
      <button aria-label="Cortana" className="flex w-[60px] justify-center">
        <svg width="22" height="22" viewBox="0 0 22 22" fill="none" stroke="#000" strokeWidth="2.6">
          <circle cx="11" cy="11" r="8.5" />
        </svg>
      </button>
      <button aria-label="Task view" className="flex w-[62px] justify-center pr-px">
        <svg width="20" height="20" viewBox="0 0 20 20" fill="none" stroke="#000" strokeWidth="1.3">
          <path d="M0.7 5.5H13V14.5H0.7ZM0.7 0V3H13V0M0.7 20V17H13V20M18.5 0V4.5M18.5 11V20" />
          <path d="M17 6h3v3h-3z" fill="#000" stroke="none" />
        </svg>
      </button>
      <div className="flex h-full pl-px">
        {pinnedApps.map((app) => (
          <button
            key={app.name}
            aria-label={app.name}
            className={
              app.name === "Word"
                ? "flex h-full w-[62px] items-center justify-center border-b-[3px] border-[#0078d7] bg-[#ecf4f8] pt-[3px]"
                : app.name === "Chrome"
                  ? "mx-1.5 flex h-full w-[52px] items-center justify-center border-b-[3px] border-[#0078d7] pt-1"
                  : "flex h-full w-[62px] items-center justify-center"
            }
          >
            {app.icon}
          </button>
        ))}
      </div>
      <div className="ml-auto h-full">
        <Tray />
      </div>
    </div>
  );
}

export default function App() {
  return (
    <div className="flex min-h-screen flex-col font-['Open_Sans',sans-serif]">
      <TitleBar />
      <RibbonTabs />
      <Ribbon />
      <Workspace />
      <StatusBar />
      <Taskbar />
    </div>
  );
}
